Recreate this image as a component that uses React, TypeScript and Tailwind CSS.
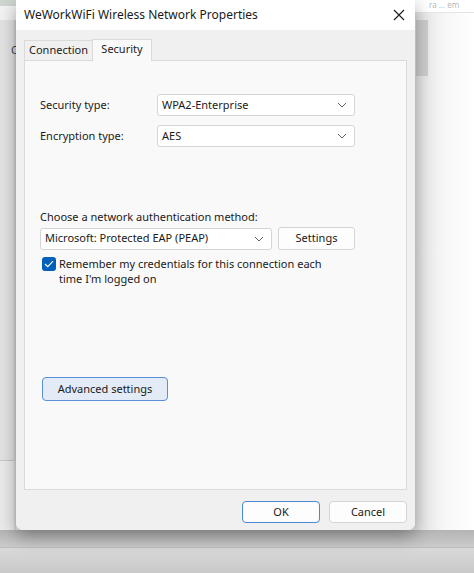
import React from 'react';

const font = { fontFamily: '"Noto Sans", "Open Sans", sans-serif' };

const Chevron = () => (
  <svg width="10" height="6" viewBox="0 0 10 6" className="shrink-0">
    <path d="M1 1 L5 5 L9 1" fill="none" stroke="#5f5f5f" strokeWidth="1" />
  </svg>
);

const Select: React.FC<{ value: string; className: string }> = ({ value, className }) => (
  <div
    className={`flex items-center justify-between bg-white border border-[#d5d5d5] rounded-[3px] pl-[4px] pr-[7px] text-[11px] text-[#1a1a1a] ${className}`}
  >
    <span>{value}</span>
    <Chevron />
  </div>
);

export default function App() {
  return (
    <div className="relative w-[474px] h-[573px] overflow-hidden bg-[#e9e9e9] text-[11px] text-[#1a1a1a]" style={font}>
      {/* windows behind the dialog */}
      <div className="absolute left-0 top-0 w-[16px] h-[6px] bg-[#cfd6cf]" />
      <div className="absolute left-0 top-[6px] w-[16px] h-[14px] bg-[#f3f3f3]" />
      <div className="absolute left-0 top-[20px] w-[16px] h-[440px] bg-[#e3e3e3] border-r-2 border-[#d0d0d0]">
        <span className="absolute left-[11px] top-[22px] text-[11px] text-[#444]">C</span>
      </div>
      <div className="absolute left-0 top-[460px] w-[16px] h-[70px] bg-[#ebebeb] border-t border-[#c9c9c9] border-r-2 border-r-[#d8d8d8]" />
      <div className="absolute left-[415px] top-0 w-[59px] h-[530px] bg-gradient-to-r from-[#e2e2e2] via-[#f7f7f7] to-[#ffffff]" />
      <div className="absolute left-[415px] top-0 w-[59px] h-[13px] bg-white border-b border-[#e4e4e4] overflow-hidden">
        <span className="absolute left-[14px] top-0 leading-[10px] text-[8px] text-[#b8b8b8] whitespace-nowrap">ra ... em</span>
      </div>
      <div className="absolute left-[416px] top-[20px] w-[12px] h-[56px] bg-[#cdcdcd]" />
      <div className="absolute left-0 top-[530px] w-[474px] h-[17px] bg-gradient-to-b from-[#b4b4b4] to-[#cbcbcb]" />
      <div className="absolute left-0 top-[547px] w-[474px] h-[26px] bg-gradient-to-b from-[#d9d9d9] to-[#c9c9c9] border-t border-[#bdbdbd]" />

      {/* dialog */}
      <div className="relative ml-[16px] w-[399px] h-[530px] flex flex-col rounded-b-[7px] overflow-hidden shadow-[0_6px_18px_rgba(0,0,0,0.35)]">
        <div className="h-[30px] shrink-0 bg-white flex items-center justify-between pl-[8px] pr-[10px]">
          <span className="text-[12px] text-[#1a1a1a]">WeWorkWiFi Wireless Network Properties</span>
          <svg width="12" height="12" viewBox="0 0 12 12">
            <path d="M1 1 L11 11 M11 1 L1 11" stroke="#1a1a1a" strokeWidth="1.1" />
          </svg>
        </div>

        <div className="flex-1 flex flex-col bg-[#f0f0f0] px-[8px]">
          <div className="flex items-end h-[30px] pt-[8px]">
            <div className="w-[68px] h-[20px] flex items-center justify-center bg-[#f0f0f0] border-t border-l border-[#dadada]">
              Connection
            </div>
            <div className="w-[60px] h-[22px] -mb-px pb-[3px] flex items-center justify-center bg-[#f9f9f9] border-t border-x border-[#dadada] relative z-10">
              Security
            </div>
          </div>

          <div className="h-[430px] bg-[#f9f9f9] border border-[#dadada] pl-[15px] flex flex-col">
            <div className="flex items-center mt-[33px] h-[22px]">
              <span className="w-[117px]">Security type:</span>
              <Select value="WPA2-Enterprise" className="w-[198px] h-[22px]" />
            </div>
            <div className="flex items-center mt-[9px] h-[22px]">
              <span className="w-[117px]">Encryption type:</span>
              <Select value="AES" className="w-[198px] h-[22px]" />
            </div>

            <div className="mt-[62px] leading-[15px]">Choose a network authentication method:</div>
            <div className="flex items-center mt-[3px] h-[23px]">
              <Select value="Microsoft: Protected EAP (PEAP)" className="w-[232px] h-[22px]" />
              <div className="ml-[6px] w-[77px] h-[23px] flex items-center justify-center bg-[#fdfdfd] border border-[#d5d5d5] rounded-[3px]">
                Settings
              </div>
            </div>
            <div className="flex items-start mt-[6px] pl-[2px]">
              <div className="mt-[1px] w-[14px] h-[14px] rounded-[3px] bg-[#005fb8] flex items-center justify-center shrink-0">
                <svg width="10" height="8" viewBox="0 0 10 8">
                  <path d="M1 4 L3.8 6.6 L9 1.2" fill="none" stroke="white" strokeWidth="1.2" />
                </svg>
              </div>
              <div className="ml-[3px] flex flex-col">
                <span className="leading-[15px]">Remember my credentials for this connection each</span>
                <span className="leading-[15px]">time I'm logged on</span>
              </div>
            </div>

            <div className="mt-[91px] pl-[2px]">
              <div className="w-[126px] h-[24px] flex items-center justify-center bg-[#e3ebf6] border border-[#5b8ed6] rounded-[4px]">
                Advanced settings
              </div>
            </div>
          </div>

          <div className="flex-1 flex items-start justify-end pt-[11px] gap-[9px]">
            <div className="w-[78px] h-[22px] flex items-center justify-center bg-[#fdfdfd] border border-[#4b86d4] rounded-[4px]">
              OK
            </div>
            <div className="w-[78px] h-[22px] flex items-center justify-center bg-[#fdfdfd] border border-[#d5d5d5] rounded-[4px]">
              Cancel
            </div>
          </div>
        </div>
      </div>
    </div>
  );
}
